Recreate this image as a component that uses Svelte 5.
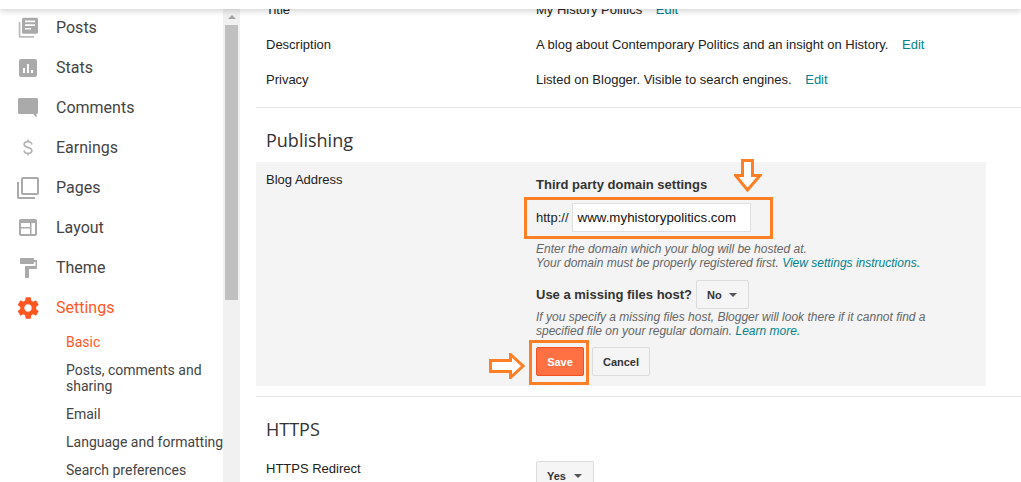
<script>
  const nav = [
    { label: 'Posts', icon: 'posts' },
    { label: 'Stats', icon: 'stats' },
    { label: 'Comments', icon: 'comments' },
    { label: 'Earnings', icon: 'earnings' },
    { label: 'Pages', icon: 'pages' },
    { label: 'Layout', icon: 'layout' },
    { label: 'Theme', icon: 'theme' },
    { label: 'Settings', icon: 'settings', active: true }
  ]
  const sub = ['Basic', 'Posts, comments and\nsharing', 'Email', 'Language and formatting', 'Search preferences']
</script>

<div class="page">
  <div class="topbar"></div>

  <aside class="sidebar">
    <nav>
      {#each nav as item}
        <div class="navitem" class:active={item.active}>
          <svg class="icon" viewBox="0 0 24 24" width="24" height="24">
            {#if item.icon === 'posts'}
              <path opacity="0.8" d="M2.700 6h1.700v14h13.600v1.700H4.200c-.8 0-1.500-.7-1.500-1.500V6z" />
              <path fill-rule="evenodd" d="M7.500 1.700h13c.8 0 1.500.7 1.500 1.500v13c0 .8-.7 1.500-1.500 1.500h-13c-.8 0-1.500-.7-1.500-1.500v-13c0-.8.7-1.500 1.500-1.500zM9 4.500v1.700h10V4.500H9zm0 3.700v1.700h10V8.200H9zm0 3.700v1.700h6v-1.700H9z" />
            {:else if item.icon === 'stats'}
              <path fill-rule="evenodd" d="M19 3H5c-1.100 0-2 .9-2 2v14c0 1.100.9 2 2 2h14c1.100 0 2-.9 2-2V5c0-1.100-.9-2-2-2zM9 17H7v-5h2v5zm4 0h-2V8h2v9zm4 0h-2v-3h2v3z" />
            {:else if item.icon === 'comments'}
              <path d="M3.500 2h17c.8 0 1.500.7 1.500 1.500v13c0 .8-.7 1.500-1.500 1.500H20.500v3.500L17 18H3.500C2.700 18 2 17.300 2 16.500v-13C2 2.700 2.700 2 3.500 2z" />
            {:else if item.icon === 'earnings'}
              <path class="dollar" d="M15.800 8.400c0-1.700-1.600-2.800-3.800-2.800S8.200 6.800 8.200 8.400c0 3.600 7.600 2.300 7.600 6.100 0 1.700-1.600 2.900-3.800 2.900s-3.800-1.200-3.800-2.900M12 3.500v2.100M12 17.400v2.100" />
            {:else if item.icon === 'pages'}
              <path d="M3 6H1v15c0 1.100.9 2 2 2h16v-2H3V6z" />
              <path fill-rule="evenodd" d="M21 1H7C5.900 1 5 1.900 5 3v14c0 1.100.9 2 2 2h14c1.100 0 2-.9 2-2V3c0-1.100-.9-2-2-2zm0 16H7V3h14v14z" />
            {:else if item.icon === 'layout'}
              <path fill-rule="evenodd" d="M5 3h14c1.100 0 2 .9 2 2v13c0 1.100-.9 2-2 2H5c-1.100 0-2-.9-2-2V5c0-1.100.9-2 2-2zm0 4v4h9V7H5zm0 5.500V18h9v-5.500H5zM15.500 7v11H19V7h-3.500z" />
            {:else if item.icon === 'theme'}
              <path d="M18 4V3c0-.6-.4-1-1-1H5c-.6 0-1 .4-1 1v4c0 .6.4 1 1 1h12c.6 0 1-.4 1-1V6h1.500v4H10c-.6 0-1 .4-1 1v10c0 .6.4 1 1 1h2c.6 0 1-.4 1-1v-8h7c.6 0 1-.4 1-1V4h-3z" />
            {:else}
              <path fill-rule="evenodd" d="M20.100 13.100c.04-.36.07-.72.07-1.100 0-.36-.03-.75-.08-1.100l2.240-1.750c.2-.15.25-.45.13-.67l-2.120-3.670c-.13-.24-.41-.32-.65-.24l-2.640 1.060c-.55-.42-1.140-.77-1.790-1.040l-.4-2.810c-.04-.27-.27-.45-.53-.45h-4.240c-.27 0-.48.19-.52.45l-.4 2.810c-.65.27-1.250.63-1.790 1.040l-2.640-1.060c-.24-.09-.52 0-.65.24L1.980 8.480c-.13.23-.09.52.13.67l2.240 1.750c-.06.35-.1.74-.1 1.100s.02.73.08 1.100l-2.240 1.750c-.2.15-.25.45-.13.67l2.120 3.670c.13.24.41.32.65.24l2.640-1.060c.55.42 1.140.77 1.790 1.040l.4 2.810c.05.27.27.45.53.45h4.240c.27 0 .49-.19.52-.45l.4-2.810c.65-.27 1.250-.62 1.790-1.040l2.640 1.060c.24.09.52 0 .65-.24l2.120-3.670c.13-.24.08-.52-.13-.67l-2.220-1.750zM12 15.700c-2.040 0-3.700-1.660-3.700-3.700s1.660-3.700 3.700-3.700 3.700 1.660 3.700 3.700-1.660 3.700-3.700 3.700z" />
            {/if}
          </svg>
          <span>{item.label}</span>
        </div>
      {/each}
    </nav>
    <ul class="subnav">
      {#each sub as s, i}
        <li class:current={i === 0}>{s}</li>
      {/each}
    </ul>
  </aside>

  <div class="scrollbar">
    <div class="arrow-up"></div>
    <div class="thumb"></div>
  </div>

  <main class="content">
    <section class="basics">
      <div class="row"><div class="label">Title</div><div class="value">My History Politics <a href="#edit">Edit</a></div></div>
      <div class="row"><div class="label">Description</div><div class="value">A blog about Contemporary Politics and an insight on History. <a href="#edit">Edit</a></div></div>
      <div class="row"><div class="label">Privacy</div><div class="value">Listed on Blogger. Visible to search engines. <a href="#edit">Edit</a></div></div>
    </section>

    <section class="publishing">
      <h2>Publishing</h2>
      <div class="panel">
        <div class="label">Blog Address</div>
        <div class="panel-body">
          <div class="heading">Third party domain settings</div>
          <div class="domain">
            <span>http://</span>
            <div class="input">www.myhistorypolitics.com</div>
          </div>
          <p class="hint">Enter the domain which your blog will be hosted at.<br />Your domain must be properly registered first. <a href="#help">View settings instructions.</a></p>
          <div class="missing">
            <span class="heading">Use a missing files host?</span>
            <div class="select">No<i></i></div>
          </div>
          <p class="hint second">If you specify a missing files host, Blogger will look there if it cannot find a<br />specified file on your regular domain. <a href="#more">Learn more.</a></p>
          <div class="actions">
            <button class="save">Save</button>
            <button class="cancel">Cancel</button>
          </div>
        </div>
      </div>
    </section>

    <section class="https">
      <h2>HTTPS</h2>
      <div class="redirect">
        <div class="label">HTTPS Redirect</div>
        <div class="select yes">Yes<i></i></div>
      </div>
    </section>
  </main>

  <!-- annotations drawn on top of the screenshot -->
  <div class="mark mark-input"></div>
  <div class="mark mark-save"></div>
  <svg class="callout down" width="28" height="33" viewBox="0 0 28 33">
    <path d="M8.500 1.500h10v15h7.500L13.500 31 1.500 16.500h7z" />
  </svg>
  <svg class="callout right" width="36" height="26" viewBox="0 0 36 26">
    <path d="M1.500 7.500h20V1.500L34 13 21.500 24.500v-6h-20z" />
  </svg>
</div>

<style>
  :global(body) {
    margin: 0;
    background: #fff;
  }
  .page {
    position: relative;
    display: flex;
    width: 1021px;
    height: 482px;
    overflow: hidden;
    font-family: "Liberation Sans", Arial, sans-serif;
    font-size: 13px;
    color: #222;
  }
  .topbar {
    position: absolute;
    top: 0;
    left: 0;
    right: 0;
    height: 9px;
    background: #fff;
    box-shadow: 0 2px 6px rgba(0, 0, 0, 0.18);
    z-index: 3;
  }
  .sidebar {
    width: 223px;
    flex: none;
    padding-top: 7px;
    font-family: Roboto, sans-serif;
    color: #444;
  }
  .navitem {
    display: flex;
    align-items: center;
    height: 40px;
    padding-left: 16px;
    font-size: 16px;
  }
  .navitem .icon {
    fill: #aaa;
    margin: 2px 16px 0 0;
    flex: none;
  }
  .navitem .dollar {
    fill: none;
    stroke: #b4b4b4;
    stroke-width: 1.7;
  }
  .navitem.active {
    color: #ff5722;
  }
  .navitem.active .icon {
    fill: #ff5722;
  }
  .subnav {
    list-style: none;
    margin: 1px 0 0;
    padding: 0 0 0 66px;
    font-size: 14px;
    line-height: 16px;
  }
  .subnav li {
    padding: 6px 0;
    white-space: pre;
  }
  .subnav li.current {
    color: #ff5722;
  }
  .scrollbar {
    width: 17px;
    flex: none;
    background: #f1f1f1;
    margin-top: 9px;
    padding: 0 2px;
    box-sizing: border-box;
  }
  .arrow-up {
    width: 0;
    height: 0;
    margin: 6px auto 6px;
    border-left: 4px solid transparent;
    border-right: 4px solid transparent;
    border-bottom: 4px solid #a3a3a3;
  }
  .thumb {
    height: 275px;
    background: #c0c0c0;
  }
  .content {
    flex: 1;
    margin-left: 16px;
    margin-top: -8px;
    min-width: 0;
  }
  .row {
    display: flex;
    height: 35px;
    align-items: center;
  }
  .label {
    width: 280px;
    padding-left: 10px;
    box-sizing: border-box;
    flex: none;
  }
  a {
    color: #00838f;
    text-decoration: none;
  }
  .value a {
    margin-left: 10px;
  }
  .basics {
    padding-bottom: 10px;
    border-bottom: 1px solid #e5e5e5;
  }
  h2 {
    margin: 0;
    padding-left: 10px;
    font-family: "Open Sans", sans-serif;
    font-weight: 400;
    font-size: 18px;
    line-height: 24px;
    color: #333;
  }
  .publishing h2 {
    padding-top: 20px;
    padding-bottom: 10px;
  }
  .panel {
    display: flex;
    width: 730px;
    height: 224px;
    background: #f4f4f4;
    padding-top: 10px;
    box-sizing: border-box;
  }
  .panel-body {
    padding-top: 5px;
  }
  .heading {
    font-weight: 700;
    color: #333;
  }
  .domain {
    display: flex;
    align-items: center;
    margin-top: 11px;
    gap: 3px;
  }
  .input {
    width: 179px;
    height: 29px;
    box-sizing: border-box;
    padding-left: 5px;
    background: #fff;
    border: 1px solid #e0e0e0;
    font-size: 13.33px;
    line-height: 27px;
    color: #111;
  }
  .hint {
    margin: 10px 0 0;
    font-style: italic;
    font-size: 12px;
    line-height: 14px;
    color: #666;
  }
  .missing {
    display: flex;
    align-items: center;
    gap: 4px;
    margin-top: 10px;
  }
  .select {
    display: flex;
    align-items: center;
    justify-content: space-between;
    box-sizing: border-box;
    width: 53px;
    height: 29px;
    padding: 0 11px 0 10px;
    background: #f5f5f5;
    border: 1px solid #dcdcdc;
    border-radius: 2px;
    font-size: 11px;
    font-weight: 700;
    color: #333;
  }
  .select i {
    width: 0;
    height: 0;
    border-left: 4px solid transparent;
    border-right: 4px solid transparent;
    border-top: 4px solid #555;
  }
  .hint.second {
    margin-top: 1px;
  }
  .actions {
    display: flex;
    gap: 8px;
    margin-top: 9px;
  }
  button {
    height: 29px;
    box-sizing: border-box;
    padding: 0;
    font-family: "Liberation Sans", Arial, sans-serif;
    font-size: 11px;
    font-weight: 700;
    border-radius: 2px;
  }
  .save {
    width: 48px;
    background: #ff7043;
    border: 1px solid #f4511e;
    color: #fff;
  }
  .cancel {
    width: 58px;
    background: #f5f5f5;
    border: 1px solid #dcdcdc;
    color: #333;
  }
  .https {
    margin-top: 10px;
    border-top: 1px solid #e5e5e5;
  }
  .https h2 {
    padding-top: 20px;
  }
  .redirect {
    display: flex;
    align-items: flex-start;
    margin-top: 20px;
  }
  .select.yes {
    width: 58px;
  }
  .mark {
    position: absolute;
    box-sizing: border-box;
    border: 3px solid #ff7f27;
    z-index: 2;
  }
  .mark-input {
    left: 524px;
    top: 197px;
    width: 249px;
    height: 42px;
  }
  .mark-save {
    left: 529px;
    top: 340px;
    width: 60px;
    height: 45px;
  }
  .callout {
    position: absolute;
    z-index: 2;
    fill: #fff;
    stroke: #ff7f27;
    stroke-width: 3;
  }
  .callout.down {
    left: 734px;
    top: 159px;
  }
  .callout.right {
    left: 489px;
    top: 353px;
  }
</style>
